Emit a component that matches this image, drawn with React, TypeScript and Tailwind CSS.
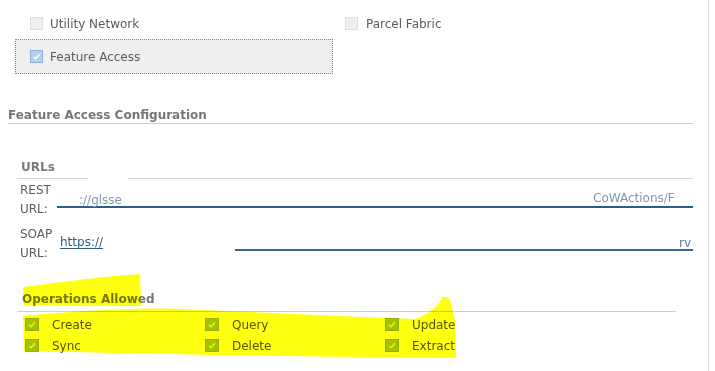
import React from "react";

type BoxKind = "empty" | "blue" | "green";

const Check = ({ color }: { color: string }) => (
  <svg viewBox="0 0 13 13" className="w-full h-full">
    <path d="M3 6.8 L5.4 9.2 L10 3.8" fill="none" stroke={color} strokeWidth="1.7" />
  </svg>
);

const Box = ({ kind }: { kind: BoxKind }) => {
  if (kind === "blue")
    return (
      <span className="w-[13px] h-[13px] shrink-0 bg-[#b4d0ec] border border-[#8fb0d4]">
        <Check color="#ffffff" />
      </span>
    );
  if (kind === "green")
    return (
      <span className="w-[14px] h-[13px] shrink-0 bg-[#a6c25c] border border-[#92b04c]">
        <Check color="#eef8d8" />
      </span>
    );
  return <span className="w-[13px] h-[13px] shrink-0 bg-[#efefef] border border-[#dedede]" />;
};

const ops = [
  ["Create", "Query", "Update"],
  ["Sync", "Delete", "Extract"],
];

const App = () => {
  return (
    <div className="relative w-[715px] h-[371px] bg-white overflow-hidden font-['DejaVu_Sans',Verdana,sans-serif] text-[12px] text-[#5c5c5c]">
      <div className="w-[709px] h-full border-r border-[#dcdcdc]">
        {/* data types */}
        <div className="flex pt-[17px] pl-[30px]">
          <div className="w-[315px] flex items-center gap-[7px] h-[13px]">
            <Box kind="empty" />
            <span>Utility Network</span>
          </div>
          <div className="flex items-center gap-[8px] h-[13px]">
            <Box kind="empty" />
            <span>Parcel Fabric</span>
          </div>
        </div>
        <div className="mt-[9px] ml-[15px] w-[318px] h-[35px] border border-dotted border-[#8a8a8a] bg-[#efefef] flex items-center pl-[14px] gap-[7px]">
          <Box kind="blue" />
          <span>Feature Access</span>
        </div>

        {/* config heading */}
        <div className="mt-[34px] ml-[8px] w-[685px] h-[16px] leading-[14px] font-bold text-[#767676] border-b border-[#cfcfcf]">
          Feature Access Configuration
        </div>

        {/* URLs */}
        <div className="ml-[17px] w-[676px]">
          <div className="mt-[36px] pl-[4px] leading-[14px] pb-[4px] font-bold text-[#7a7a7a]">URLs</div>
          <div className="flex h-px">
            <div className="w-[71px] bg-[#d4d4d4]" />
            <div className="w-[40px]" />
            <div className="flex-1 bg-[#d4d4d4]" />
          </div>

          <div className="flex mt-[2px] leading-[19px]">
            <div className="w-[40px] pl-[3px]">
              <div>REST</div>
              <div>URL:</div>
            </div>
            <div className="flex-1 relative">
              <div className="absolute left-0 right-0 top-[25px] h-[2px] bg-[#2f5c88]" />
              <span className="absolute left-[22px] top-[13px] leading-[12px] text-[#7f9cbb]">://glsse</span>
              <span className="absolute left-[536px] top-[10px] text-[#7d97b3] leading-[14px]">CoWActions/F</span>
            </div>
          </div>

          <div className="flex mt-[6px] leading-[19px]">
            <div className="w-[40px] pl-[3px]">
              <div>SOAP</div>
              <div>URL:</div>
            </div>
            <div className="flex-1 relative">
              <span className="absolute left-[3px] top-[10px] leading-[14px] text-[#2f5c88] underline underline-offset-2">
                https://
              </span>
              <div className="absolute left-[178px] right-0 top-[24px] h-[2px] bg-[#3a6590]" />
              <span className="absolute right-[2px] top-[12px] leading-[12px] text-[#5b7ea3]">rv</span>
            </div>
          </div>
        </div>

        {/* operations */}
        <div className="ml-[17px] w-[659px] mt-[29px] pl-[5px] leading-[14px] pb-[5px] font-bold text-[#767676] border-b border-[#cfcfcf]">
          Operations Allowed
        </div>
        <div className="ml-[25px] mt-[2px]">
          {ops.map((row, i) => (
            <div key={i} className="grid grid-cols-[180px_180px_180px] h-[21px] items-center">
              {row.map((op) => (
                <div key={op} className="flex items-center gap-[13px] text-[#555555]">
                  <Box kind="green" />
                  <span>{op}</span>
                </div>
              ))}
            </div>
          ))}
        </div>
      </div>

      {/* marker highlight over the operations */}
      <svg
        className="absolute inset-0 pointer-events-none mix-blend-multiply"
        width="715"
        height="371"
        viewBox="0 0 715 371"
      >
        <path
          d="M23 287 C60 282 100 277 140 274 L141 306 C100 306 60 306 24 305 Z"
          fill="#ffff10"
        />
        <path
          d="M23 316 C80 311 140 306 200 310 C300 314 380 318 415 319 C430 314 438 305 443 297 L449 297 C451 305 453 312 455 320 L456 358 C380 358 200 355 24 351 Z"
          fill="#ffff10"
        />
      </svg>
    </div>
  );
};

export default App;
